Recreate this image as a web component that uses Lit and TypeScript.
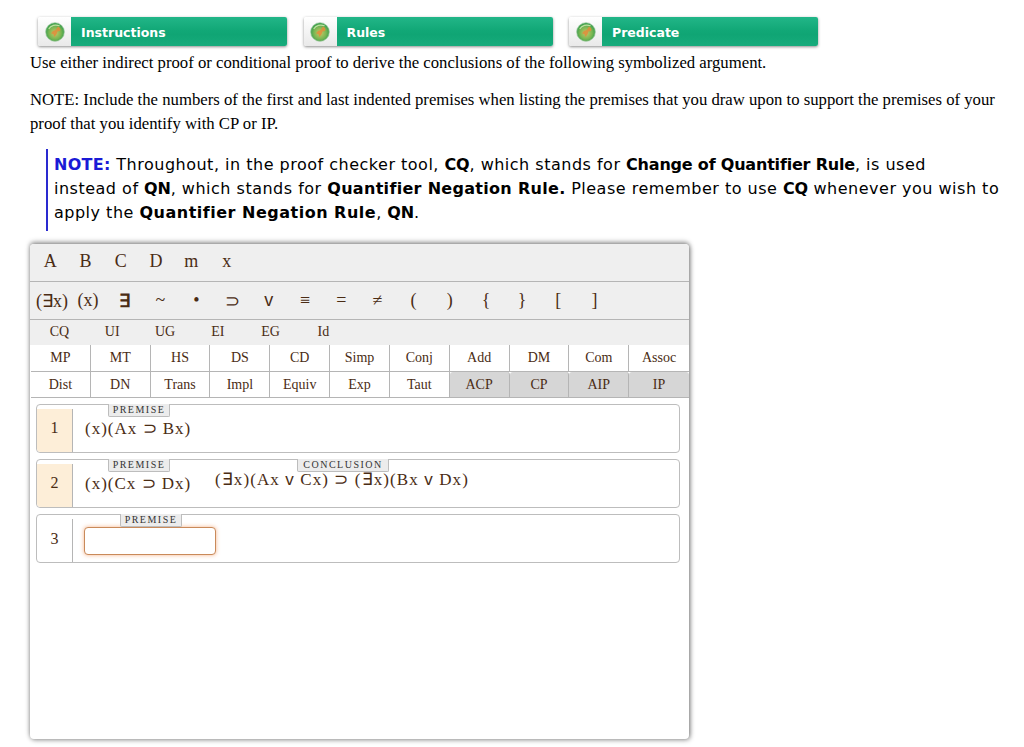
import { LitElement, html, css, svg } from "lit";
import { customElement } from "lit/decorators.js";

const globe = (id: string) => svg`<svg class="globe" viewBox="0 0 24 24" width="20" height="20">
  <defs>
    <radialGradient id=${id} cx="50%" cy="55%" r="55%">
      <stop offset="0%" stop-color="#c9c765"/><stop offset="60%" stop-color="#79b653"/><stop offset="100%" stop-color="#2f9a4c"/>
    </radialGradient>
  </defs>
  <circle cx="12" cy="12" r="11.2" fill=${`url(#${id})`} stroke="#9cc79a" stroke-width=".8"/>
  <path d="M15.5 5.5c2.6 1 3.6 3.2 2.6 5.2l-3.2.8-.9 3-2.8 3.6-1-3.4-3-1.2 2.4-2.8 3.2-1z" fill="#de8f3d" opacity=".9"/>
  <path d="M4.5 8.5C7 4 12.5 2.6 17.5 4.6" fill="none" stroke="#d5ecb4" stroke-width="1.4" opacity=".8"/>
</svg>`;

const tabs = ["Instructions", "Rules", "Predicate"];
const row1 = ["A", "B", "C", "D", "m", "x"];
const row2 = ["∃", "~", "•", "⊃", "v", "≡", "=", "≠", "(", ")", "{", "}", "[", "]"];
const row3 = ["CQ", "UI", "UG", "EI", "EG", "Id"];
const row4 = ["MP", "MT", "HS", "DS", "CD", "Simp", "Conj", "Add", "DM", "Com", "Assoc"];
const row5 = ["Dist", "DN", "Trans", "Impl", "Equiv", "Exp", "Taut", "ACP", "CP", "AIP", "IP"];
const shaded = new Set(["ACP", "CP", "AIP", "IP"]);

@customElement("app-root")
export class AppRoot extends LitElement {
  static styles = css`
    :host { display: block; width: 1024px; height: 747px; overflow: hidden; background: #fff; font-family: "Liberation Serif", serif; color: #000; }
    .tabs { display: flex; gap: 16.5px; padding: 17px 0 0 38px; height: 29px; box-sizing: content-box; }
    .tab { display: flex; width: 249px; height: 29px; border-radius: 2px; box-shadow: 0 1px 3px rgba(0,0,0,.45); overflow: hidden; }
    .tab-icon { width: 33px; display: flex; align-items: center; justify-content: center; background: linear-gradient(#fff, #e9e9e9); }
    .tab-label { flex: 1; display: flex; align-items: center; padding: 1px 0 0 10px; box-sizing: border-box; color: #fff; font: bold 12.5px "DejaVu Sans", sans-serif; background: linear-gradient(#22b688, #12a877 45%, #10a574 60%, #16ab7c); }
    .globe { display: block; }
    .intro { margin: 5px 0 0 30px; width: 975px; font-size: 16.72px; line-height: 24px; }
    .intro p { margin: 0 0 13px; }
    .note { margin: 13px 0 0 46px; width: 970px; box-sizing: border-box; height: 82px; border-left: 2px solid #2a2ad0; padding: 4px 0 0 6px; font: 16px/24px "DejaVu Sans", sans-serif; letter-spacing: .5px; }
    .note .blue { color: #1a1ad6; font-weight: bold; letter-spacing: .3px; }
    .note b { letter-spacing: -.2px; }
    .note b.w1 { letter-spacing: .3px; }
    .note b.w2 { letter-spacing: .5px; }
    .tool { margin: 13px 0 0 30px; width: 659px; height: 495px; box-sizing: border-box; border-radius: 4px; background: #fff; box-shadow: 0 -2px 5px rgba(0,0,0,.35), 1px 1px 5px rgba(0,0,0,.4); color: #4a2c14; overflow: hidden; }
    .r { display: flex; background: #efefef; align-items: center; box-sizing: border-box; }
    .r1 { height: 38px; padding: 0 0 2px 2.5px; border-bottom: 1px solid #b5b5b5; font-size: 18px; }
    .r1 span { width: 35.3px; text-align: center; }
    .r2 { height: 38px; padding-left: 4px; border-bottom: 1px solid #b5b5b5; font-size: 18px; }
    .r2 span { width: 36.2px; text-align: center; flex: none; }
    .r2 .q1 { width: 36px; }
    .r2 .q2 { width: 36px; }
    .r2 .ex { font-weight: bold; }
    .vee { font-family: "Liberation Sans", sans-serif; }
    .r3 { height: 25px; padding: 0 0 2px 3px; font-size: 14px; }
    .r3 span { width: 52.8px; text-align: center; }
    .grid { display: grid; grid-template-columns: repeat(11, 1fr); padding-left: 1px; font-size: 14px; background: #fff; }
    .c { display: flex; align-items: center; justify-content: center; height: 27px; border-right: 1px solid #b5b5b5; border-bottom: 1px solid #b5b5b5; box-sizing: border-box; }
    .c.last { border-right: none; }
    .c.low { height: 26px; }
    .c.sh { background: #d6d6d6; border-radius: 3px 3px 0 0; }
    .lines { padding: 6px 9px 0 6px; display: flex; flex-direction: column; gap: 6px; }
    .line { position: relative; display: flex; align-items: center; height: 49px; box-sizing: border-box; border: 1px solid #bdbdbd; border-radius: 4px; font-size: 17px; letter-spacing: 1px; }
    .num { align-self: flex-end; width: 36px; height: 43px; box-sizing: border-box; display: flex; align-items: center; justify-content: center; padding-bottom: 5px; border-right: 1px solid #b5b5b5; letter-spacing: 0; font-size: 16px; border-radius: 0 0 0 4px; }
    .num.done { background: #fdeed8; }
    .num.open { padding-bottom: 3px; }
    .f { margin-left: 12px; width: 130px; white-space: nowrap; }
    .concl { padding-bottom: 8px; white-space: nowrap; letter-spacing: 1.1px; }
    .tag { position: absolute; top: -1px; height: 13px; box-sizing: border-box; display: flex; align-items: center; justify-content: center; padding-bottom: 1px; background: #ececec; border: 1px solid #bdbdbd; border-top: none; border-radius: 0 0 2px 2px; font-size: 10px; letter-spacing: 1.5px; color: #333; }
    .t1 { left: 71px; width: 62px; }
    .t2 { left: 83px; width: 62px; }
    .t3 { left: 260px; width: 92px; }
    .field { margin-left: 11px; width: 132px; height: 28px; box-sizing: border-box; border: 1px solid #c98a5a; border-radius: 4px; background: #fff; box-shadow: 0 0 4px rgba(240,130,60,.6); align-self: flex-end; margin-bottom: 7px; }
  `;

  private sym(s: string) {
    return html`<span class=${s === "v" ? "vee" : s === "∃" ? "ex" : ""}>${s}</span>`;
  }

  render() {
    const vee = html`<span class="vee">v</span>`;
    return html`
      <div class="tabs">
        ${tabs.map((t, i) => html`<div class="tab"><div class="tab-icon">${globe(`g${i}`)}</div><div class="tab-label">${t}</div></div>`)}
      </div>
      <div class="intro">
        <p>Use either indirect proof or conditional proof to derive the conclusions of the following symbolized argument.</p>
        <p>NOTE: Include the numbers of the first and last indented premises when listing the premises that you draw upon to support the premises of your proof that you identify with CP or IP.</p>
      </div>
      <div class="note">
        <span class="blue">NOTE:</span> Throughout, in the proof checker tool, <b>CQ</b>, which stands for <b>Change of Quantifier Rule</b>, is used<br />instead of <b>QN</b>, which stands for <b class="w1">Quantifier Negation Rule.</b> Please remember to use <b>CQ</b> whenever you wish to<br />apply the <b class="w2">Quantifier Negation Rule</b>, <b>QN</b>.
      </div>
      <div class="tool">
        <div class="r r1">${row1.map((s) => html`<span>${s}</span>`)}</div>
        <div class="r r2"><span class="q1">(∃x)</span><span class="q2">(x)</span>${row2.map((s) => this.sym(s))}</div>
        <div class="r r3">${row3.map((s) => html`<span>${s}</span>`)}</div>
        <div class="grid">
          ${row4.map((s, i) => html`<div class="c ${i === 10 ? "last" : ""}">${s}</div>`)}
          ${row5.map((s, i) => html`<div class="c low ${i === 10 ? "last" : ""} ${shaded.has(s) ? "sh" : ""}">${s}</div>`)}
        </div>
        <div class="lines">
          <div class="line"><div class="num done">1</div><div class="f">(x)(Ax ⊃ Bx)</div><div class="tag t1">PREMISE</div></div>
          <div class="line"><div class="num done">2</div><div class="f">(x)(Cx ⊃ Dx)</div><div class="concl">(∃x)(Ax ${vee} Cx) ⊃ (∃x)(Bx ${vee} Dx)</div><div class="tag t1">PREMISE</div><div class="tag t3">CONCLUSION</div></div>
          <div class="line"><div class="num open">3</div><div class="field"></div><div class="tag t2">PREMISE</div></div>
        </div>
      </div>
    `;
  }
}
